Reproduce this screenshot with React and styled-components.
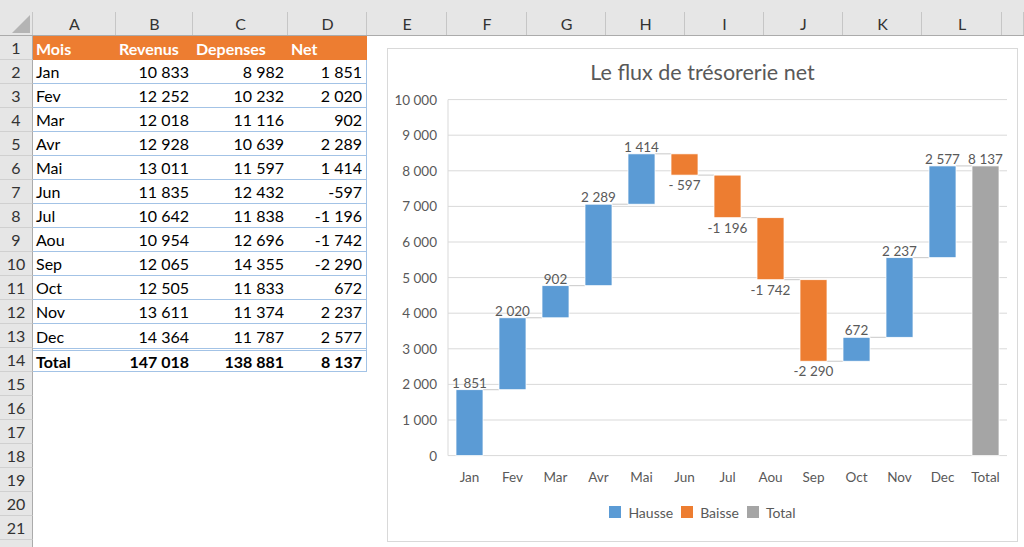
import styled, { createGlobalStyle } from "styled-components";

const GlobalStyle = createGlobalStyle`
  html, body { margin: 0; padding: 0; background: #fff; }
  body { font-family: Lato, "Liberation Sans", sans-serif; overflow: hidden; }
`;

// widths of columns A..L (M takes what is left)
const COLS = [83, 77, 95, 79, 80, 80, 79, 79, 79, 79, 79, 80];
const LETTERS = "ABCDEFGHIJKLM".split("");

const HEAD = ["Mois", "Revenus", "Depenses", "Net"];
const ROWS = [
  ["Jan", "10 833", "8 982", "1 851"],
  ["Fev", "12 252", "10 232", "2 020"],
  ["Mar", "12 018", "11 116", "902"],
  ["Avr", "12 928", "10 639", "2 289"],
  ["Mai", "13 011", "11 597", "1 414"],
  ["Jun", "11 835", "12 432", "-597"],
  ["Jul", "10 642", "11 838", "-1 196"],
  ["Aou", "10 954", "12 696", "-1 742"],
  ["Sep", "12 065", "14 355", "-2 290"],
  ["Oct", "12 505", "11 833", "672"],
  ["Nov", "13 611", "11 374", "2 237"],
  ["Dec", "14 364", "11 787", "2 577"],
];
const TOTAL = ["Total", "147 018", "138 881", "8 137"];

const NET = [1851, 2020, 902, 2289, 1414, -597, -1196, -1742, -2290, 672, 2237, 2577];
const LABELS = ["1 851", "2 020", "902", "2 289", "1 414", "- 597", "-1 196", "-1 742", "-2 290", "672", "2 237", "2 577"];
const MONTHS = ["Jan", "Fev", "Mar", "Avr", "Mai", "Jun", "Jul", "Aou", "Sep", "Oct", "Nov", "Dec", "Total"];

const BLUE = "#5B9BD5";
const ORANGE = "#ED7D31";
const GREY = "#A5A5A5";

const Sheet = styled.div`
  position: relative;
  width: 1024px;
  height: 547px;
  overflow: hidden;
  display: grid;
  grid-template-columns: 33px ${COLS.map((c) => c + "px").join(" ")} 1fr;
  grid-template-rows: 36px repeat(22, 24px);
  font-size: 16px;
  color: #000;
`;

const ColHead = styled.div`
  position: relative;
  box-sizing: border-box;
  background: #e6e6e6;
  border-bottom: 1px solid #ababab;
  display: flex;
  align-items: flex-end;
  justify-content: center;
  padding-bottom: 2px;
  color: #333;
  &::after {
    content: "";
    position: absolute;
    right: 0;
    top: 12px;
    bottom: 0;
    width: 1px;
    background: #c6c6c6;
  }
`;

const Corner = styled(ColHead)`
  &::before {
    content: "";
    position: absolute;
    right: 3px;
    bottom: 2px;
    width: 0;
    height: 0;
    border-left: 18px solid transparent;
    border-bottom: 18px solid #b4b4b4;
  }
`;

const RowHead = styled.div`
  box-sizing: border-box;
  background: #e6e6e6;
  border-right: 1px solid #ababab;
  border-bottom: 1px solid #d0d0d0;
  display: flex;
  align-items: center;
  justify-content: center;
  color: #333;
`;

const Cell = styled.div`
  box-sizing: border-box;
  display: flex;
  align-items: center;
  justify-content: ${(p) => (p.$num ? "flex-end" : "flex-start")};
  padding: 0 4px 0 3px;
  white-space: pre;
  font-weight: ${(p) => (p.$bold ? 700 : 400)};
  background: ${(p) => (p.$head ? ORANGE : "#fff")};
  color: ${(p) => (p.$head ? "#fff" : "#000")};
  border-bottom: ${(p) => (p.$line ? "1px solid #a3c3e6" : "none")};
  border-top: ${(p) => (p.$total ? "3px double #a3c3e6" : "none")};
  border-right: ${(p) => (p.$edge ? "1px solid #a3c3e6" : "none")};
`;

const Blank = styled.div`
  grid-column: span 9;
  background: #fff;
`;

const ChartBox = styled.div`
  position: absolute;
  left: 387px;
  top: 48px;
  width: 631px;
  height: 494px;
  box-sizing: border-box;
  border: 1px solid #d9d9d9;
  background: #fff;
  display: flex;
  flex-direction: column;
`;

const ChartTitle = styled.div`
  height: 36px;
  box-sizing: border-box;
  padding-top: 10px;
  text-align: center;
  font-size: 21.5px;
  line-height: 26px;
  color: #595959;
`;

const Plot = styled.svg`
  display: block;
  width: 629px;
  height: 410px;
  font-family: Lato, "Liberation Sans", sans-serif;
`;

const AxisText = styled.text`
  font-size: 13.5px;
  fill: #595959;
`;

const Legend = styled.div`
  margin-top: 7px;
  height: 20px;
  display: flex;
  justify-content: center;
  align-items: center;
  gap: 8px;
  font-size: 14px;
  color: #595959;
`;

const LegendItem = styled.div`
  display: flex;
  align-items: center;
  gap: 7px;
`;

const Swatch = styled.span`
  width: 12px;
  height: 12px;
  background: ${(p) => p.$color};
`;

// plot geometry, in svg units
const LEFT = 60;
const RIGHT = 619;
const ZERO = 370.6;
const SCALE = 0.0356;
const BAND = 43;
const BAR = 27;
const Y = (v) => ZERO - v * SCALE;
const CX = (i) => LEFT + BAND * i + BAND / 2;

function Waterfall() {
  const ticks = [];
  for (let v = 0; v <= 10000; v += 1000) ticks.push(v);

  let run = 0;
  const bars = NET.map((n, i) => {
    const start = run;
    run += n;
    return { i, start, end: run, n };
  });

  return (
    <Plot viewBox="0 0 629 410">
      {ticks.map((v) => (
        <line key={v} x1={LEFT} x2={RIGHT} y1={Y(v)} y2={Y(v)} stroke="#d9d9d9" strokeWidth="1" />
      ))}
      <line x1={LEFT} x2={LEFT} y1={Y(10000)} y2={ZERO} stroke="#d9d9d9" strokeWidth="1" />
      {ticks.map((v) => (
        <AxisText key={"t" + v} x={49} y={Y(v)} textAnchor="end" dominantBaseline="central">
          {v === 0 ? "0" : `${Math.floor(v / 1000)} 000`}
        </AxisText>
      ))}

      {bars.map((b) => {
        const x2 = CX(b.i + 1) - BAR / 2;
        return (
          <line key={"c" + b.i} x1={CX(b.i) + BAR / 2} x2={x2} y1={Y(b.end)} y2={Y(b.end)} stroke="#c8c8c8" strokeWidth="1" />
        );
      })}

      {bars.map((b) => {
        const top = Math.max(b.start, b.end);
        return (
          <rect
            key={"b" + b.i}
            x={CX(b.i) - BAR / 2}
            y={Y(top)}
            width={BAR}
            height={Math.abs(b.n) * SCALE}
            fill={b.n >= 0 ? BLUE : ORANGE}
            stroke="#fff"
            strokeWidth="0.75"
          />
        );
      })}
      <rect x={CX(12) - BAR / 2} y={Y(8137)} width={BAR} height={8137 * SCALE} fill={GREY} stroke="#fff" strokeWidth="0.75" />

      {bars.map((b) => (
        <AxisText
          key={"l" + b.i}
          x={CX(b.i)}
          y={b.n >= 0 ? Y(b.end) - 7 : Y(b.end) + 10}
          textAnchor="middle"
          dominantBaseline="central"
        >
          {LABELS[b.i]}
        </AxisText>
      ))}
      <AxisText x={CX(12)} y={Y(8137) - 7} textAnchor="middle" dominantBaseline="central">
        8 137
      </AxisText>

      {MONTHS.map((m, i) => (
        <AxisText key={m} x={CX(i)} y={392} textAnchor="middle" dominantBaseline="central">
          {m}
        </AxisText>
      ))}
    </Plot>
  );
}

export default function App() {
  const rows = [];
  rows.push(
    <RowHead key="h1">1</RowHead>,
    ...HEAD.map((h, c) => (
      <Cell key={"h" + c} $head $bold>
        {h}
      </Cell>
    )),
    <Blank key="hb" />
  );
  ROWS.forEach((r, ri) => {
    rows.push(
      <RowHead key={"r" + ri}>{ri + 2}</RowHead>,
      ...r.map((v, c) => (
        <Cell key={ri + "-" + c} $num={c > 0} $line={ri < ROWS.length - 1} $edge={c === 3}>
          {v}
        </Cell>
      )),
      <Blank key={"b" + ri} />
    );
  });
  rows.push(
    <RowHead key="rt">14</RowHead>,
    ...TOTAL.map((v, c) => (
      <Cell key={"t" + c} $num={c > 0} $bold $total $line $edge={c === 3}>
        {v}
      </Cell>
    )),
    <Blank key="tb" />
  );
  for (let r = 15; r <= 22; r++) {
    // row 22 only peeks in at the bottom edge, its number is hidden
    rows.push(
      <RowHead key={"e" + r}>{r < 22 ? r : ""}</RowHead>,
      <Cell key={"ea" + r} />,
      <Cell key={"eb" + r} />,
      <Cell key={"ec" + r} />,
      <Cell key={"ed" + r} />,
      <Blank key={"eg" + r} />
    );
  }

  return (
    <>
      <GlobalStyle />
      <Sheet>
        <Corner />
        {LETTERS.map((l) => (
          <ColHead key={l}>{l === "M" ? "" : l}</ColHead>
        ))}
        {rows}
        <ChartBox>
          <ChartTitle>Le flux de trésorerie net</ChartTitle>
          <Waterfall />
          <Legend>
            <LegendItem>
              <Swatch $color={BLUE} />
              Hausse
            </LegendItem>
            <LegendItem>
              <Swatch $color={ORANGE} />
              Baisse
            </LegendItem>
            <LegendItem>
              <Swatch $color={GREY} />
              Total
            </LegendItem>
          </Legend>
        </ChartBox>
      </Sheet>
    </>
  );
}
